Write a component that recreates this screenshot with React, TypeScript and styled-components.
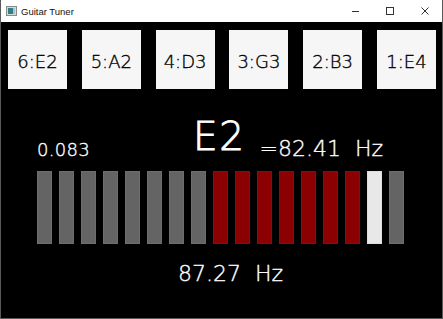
import React from "react";
import styled, { createGlobalStyle } from "styled-components";

const Global = createGlobalStyle`
  body { margin: 0; background: #000; }
`;

const Window = styled.div`
  width: 443px;
  height: 319px;
  box-sizing: border-box;
  display: flex;
  flex-direction: column;
  border: 1px solid #5a5a5a;
  border-top: none;
  background: #000;
  overflow: hidden;
`;

const TitleBar = styled.div`
  height: 22px;
  flex: none;
  display: flex;
  align-items: center;
  background: #fff;
  font-family: "Liberation Sans", Arial, sans-serif;
  font-size: 9.5px;
  color: #111;
`;

const AppIcon = styled.svg`
  margin: 0 4px 0 5px;
  flex: none;
`;

const Title = styled.span`
  flex: 1;
  padding-top: 1px;
`;

const Caption = styled.div`
  width: 34.5px;
  height: 22px;
  display: flex;
  align-items: center;
  justify-content: center;
`;

const Content = styled.div`
  flex: 1;
  display: flex;
  flex-direction: column;
  font-family: "DejaVu Sans", sans-serif;
  font-weight: 200;
  color: #fff;
  -webkit-font-smoothing: antialiased;
  -webkit-text-stroke: 0.35px currentColor;
`;

const StringRow = styled.div`
  display: flex;
  justify-content: space-between;
  padding: 8px 6px 0 7px;
`;

const StringButton = styled.div`
  width: 59px;
  height: 59px;
  box-sizing: border-box;
  padding-top: 5px;
  display: flex;
  align-items: center;
  justify-content: center;
  background: #f6f6f6;
  color: #000;
  font-size: 18px;
  line-height: 18px;
`;

const Readout = styled.div`
  height: 54px;
  margin-top: 28px;
  padding-left: 36px;
  display: grid;
  grid-template-columns: 156px 66.5px 1fr;
  align-items: start;
  white-space: pre;
`;

const Ratio = styled.div`
  margin-top: 24px;
  font-size: 18px;
  line-height: 18px;
  letter-spacing: 0.3px;
`;

const Note = styled.div`
  font-size: 39px;
  line-height: 39px;
  letter-spacing: 1.5px;
  -webkit-text-stroke: 0.9px #fff;
`;

const Target = styled.div`
  margin-top: 21px;
  font-size: 22px;
  line-height: 22px;
`;

const Meter = styled.div`
  display: flex;
  gap: 7px;
  padding-left: 36px;
`;

const Bar = styled.div<{ $tone: "off" | "on" | "hit" }>`
  width: 15px;
  height: 73px;
  background: ${(p) =>
    p.$tone === "on" ? "#8b0000" : p.$tone === "hit" ? "#e8e8e8" : "#646464"};
  box-shadow: inset 0 0 0 1px
    ${(p) =>
      p.$tone === "on" ? "#8f0a0a" : p.$tone === "hit" ? "#dedede" : "#6e6e6e"};
`;

const Measured = styled.div`
  margin-top: 19px;
  padding-left: 177px;
  font-size: 22px;
  line-height: 22px;
  white-space: pre;
`;

const strings = ["6:E2", "5:A2", "4:D3", "3:G3", "2:B3", "1:E4"];

const bars: ("off" | "on" | "hit")[] = [
  ...Array(8).fill("off"),
  ...Array(7).fill("on"),
  "hit",
  "off",
];

export default function App() {
  return (
    <>
      <Global />
      <Window>
        <TitleBar>
          <AppIcon width="11" height="10" viewBox="0 0 11 10">
            <rect x="0.5" y="0.5" width="10" height="9" fill="#d8d8d8" stroke="#8a8a8a" />
            <rect x="2" y="2" width="5" height="6" fill="#2f7f86" />
            <rect x="7" y="2" width="2" height="6" fill="#9fc8cf" />
          </AppIcon>
          <Title>Guitar Tuner</Title>
          <Caption>
            <svg width="10" height="10" viewBox="0 0 10 10">
              <path d="M1 5.5H8" stroke="#333" strokeWidth="1" />
            </svg>
          </Caption>
          <Caption>
            <svg width="10" height="10" viewBox="0 0 10 10">
              <rect x="1.5" y="1.5" width="7" height="7" fill="none" stroke="#333" />
            </svg>
          </Caption>
          <Caption>
            <svg width="10" height="10" viewBox="0 0 10 10">
              <path d="M1.5 1.5L8.5 8.5M8.5 1.5L1.5 8.5" stroke="#333" strokeWidth="1" />
            </svg>
          </Caption>
        </TitleBar>
        <Content>
          <StringRow>
            {strings.map((s) => (
              <StringButton key={s}>{s}</StringButton>
            ))}
          </StringRow>
          <Readout>
            <Ratio>0.083</Ratio>
            <Note>E2</Note>
            <Target>=82.41  Hz</Target>
          </Readout>
          <Meter>
            {bars.map((t, i) => (
              <Bar key={i} $tone={t} />
            ))}
          </Meter>
          <Measured>87.27  Hz</Measured>
        </Content>
      </Window>
    </>
  );
}
